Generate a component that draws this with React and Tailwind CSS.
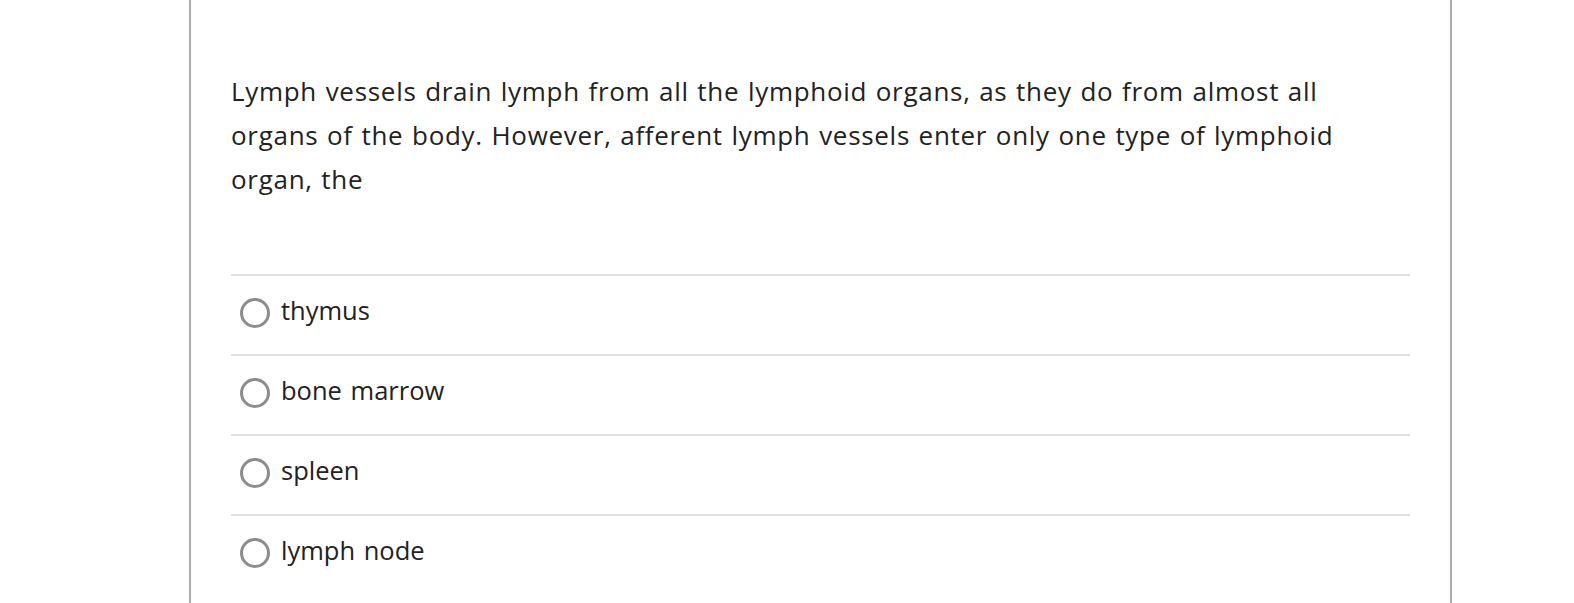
import React from "react";

const options = ["thymus", "bone marrow", "spleen", "lymph node"];

export default function App() {
  return (
    <div className="min-h-screen bg-white font-['Open_Sans','Liberation_Sans',sans-serif] text-[#222]">
      <div className="ml-[189px] w-[1263px] border-x-2 border-[#aaa] px-[40px] pt-[69px] h-[603px] overflow-hidden">
        <p className="text-[26px] leading-[44px] tracking-[0.7px] [word-spacing:1.2px]">
          Lymph vessels drain lymph from all the lymphoid organs, as they do from almost all
          <br />
          organs of the body. However, afferent lymph vessels enter only one type of lymphoid
          <br />
          organ, the
        </p>
        <div className="mt-[73px]">
          {options.map((opt) => (
            <div key={opt} className="flex h-[80px] items-center gap-[11px] border-t-2 border-[#e0e0e0] pb-[4px] pl-[9px]">
              <span className="h-[30px] w-[30px] rounded-full border-[3px] border-[#8c8c8c]" />
              <span className="pb-[5px] text-[25.5px] [word-spacing:2px]">{opt}</span>
            </div>
          ))}
        </div>
      </div>
    </div>
  );
}
